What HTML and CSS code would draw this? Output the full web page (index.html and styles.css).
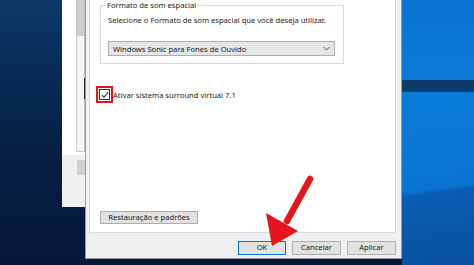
FILE: index.html
```html
<!DOCTYPE html>
<html lang="pt">
<head>
<meta charset="utf-8">
<link rel="stylesheet" href="styles.css">
</head>
<body>
<div class="screen">
  <div class="desk">
    <div class="desk-left"></div>
    <div class="desk-right"><div class="band"></div><div class="lower"></div></div>
  </div>

  <div class="win back">
    <div class="back-panel">
      <div class="back-list">
        <div class="scroll"><div class="thumb"></div><div class="focus"></div></div>
      </div>
      <div class="back-btn"></div>
    </div>
  </div>

  <div class="win dialog">
    <div class="panel">
      <fieldset class="group">
        <legend class="legend">Formato de som espacial</legend>
        <p class="desc">Selecione o Formato de som espacial que você deseja utilizar.</p>
        <div class="select">
          <span>Windows Sonic para Fones de Ouvido</span>
          <svg class="chev" width="7" height="5" viewBox="0 0 7 5"><path d="M0.5 1 L3.5 4 L6.5 1" fill="none" stroke="#555" stroke-width="1"/></svg>
        </div>
      </fieldset>
      <div class="check-row">
        <span class="highlight"><span class="box"><svg width="8" height="8" viewBox="0 0 8 8"><path d="M1 4.2 L3 6.3 L7 1.2" fill="none" stroke="#333" stroke-width="1.1"/></svg></span></span>
        <span class="check-label">Ativar sistema surround virtual 7.1</span>
      </div>
      <div class="spacer"></div>
      <div class="restore-row"><button class="btn restore">Restauração e padrões</button></div>
    </div>
    <div class="footer">
      <button class="btn ok">OK</button>
      <button class="btn">Cancelar</button>
      <button class="btn">Aplicar</button>
    </div>
  </div>

  <svg class="arrow" width="474" height="265" viewBox="0 0 474 265">
    <line x1="310" y1="179" x2="287" y2="221" stroke="#e8141b" stroke-width="6.5" stroke-linecap="round"/>
    <polygon points="266,213 298,231 272,246" fill="#e8141b"/>
  </svg>
</div>
</body>
</html>
```
FILE: styles.css
```css
* { box-sizing: border-box; }
html, body { margin: 0; padding: 0; }
body { width: 474px; height: 265px; overflow: hidden; font-family: "Noto Sans", "Open Sans", sans-serif; font-size: 7.6px; color: #1a1a1a; }
.screen { position: relative; width: 474px; height: 265px; overflow: hidden; }

.desk { display: flex; width: 100%; height: 100%; }
.desk-left { flex: 1; background: linear-gradient(to bottom, #0d3868 0%, #082a55 30%, #061f42 60%, #04183a 100%); }
.desk-right { width: 72px; display: flex; flex-direction: column; background: linear-gradient(to bottom, #0a72cf 0%, #0b7bd9 30%); }
.band { margin-top: 80px; height: 12px; background: #0b3a6c; }
.lower { flex: 1; background: linear-gradient(172deg, #0b7cdb 0%, #0a74d2 55%, #0a5db3 58%, #0851a0 100%); }

.win { position: absolute; }

.back { left: 62px; top: 0; width: 24px; height: 207px; background: #f0f0f0; }
.back-panel { height: 155px; background: #fff; padding-left: 14px; display: flex; flex-direction: column; }
.back-list { height: 152px; border: 1px solid #c8c8c8; border-top: 0; border-right: 0; }
.scroll { width: 8px; height: 100%; position: relative; background: #f4f4f4; border-right: 1px solid #bbb; }
.thumb { height: 36px; background: #cdcdcd; }
.focus { position: absolute; right: -1px; top: 78px; width: 1px; height: 21px; background: #222; }
.back-btn { position: absolute; left: 15px; top: 160px; width: 9px; height: 15px; background: #cfcfcf; }

.dialog { left: 85px; top: 0; width: 317px; height: 259px; background: #f0f0f0; border: 1px solid #9a9a9a; border-top: 0; display: flex; flex-direction: column; padding: 0 5px 0 3px; }
.panel { height: 233px; background: #fff; border: 1px solid #dadada; border-top: 0; display: flex; flex-direction: column; padding: 0 0 8px 10px; }

.group { margin: 0; width: 244px; height: 64px; border: 1px solid #dcdcdc; padding: 0 0 0 7px; }
.legend { padding: 0 1px; margin-left: -2px; line-height: 10px; }
.desc { margin: 5px 0 0 0; line-height: 10px; }
.select { margin-top: 16px; width: 227px; height: 15px; background: #e5e5e5; border: 1px solid #adadad; display: flex; align-items: center; justify-content: space-between; padding: 0 4px 0 4px; }

.check-row { display: flex; align-items: center; margin-top: 22px; margin-left: -4px; }
.highlight { width: 17px; height: 17px; border: 2px solid #e8141b; display: flex; align-items: center; justify-content: center; background: #fff; }
.box { width: 11px; height: 11px; border: 1px solid #333; display: flex; align-items: center; justify-content: center; background: #fff; }

.spacer { flex: 1; }
.restore-row { display: flex; }
.btn { font-family: inherit; font-size: 7.6px; color: #1a1a1a; background: #e1e1e1; border: 1px solid #adadad; padding: 0; height: 13px; line-height: 11px; }
.restore { width: 98px; }

.footer { flex: 1; display: flex; justify-content: flex-end; align-items: center; gap: 6px; padding-top: 4px; }
.footer .btn { width: 49px; height: 14px; }
.footer .ok { width: 48px; border-color: #0078d7; }

.arrow { position: absolute; left: 0; top: 0; pointer-events: none; }
```
